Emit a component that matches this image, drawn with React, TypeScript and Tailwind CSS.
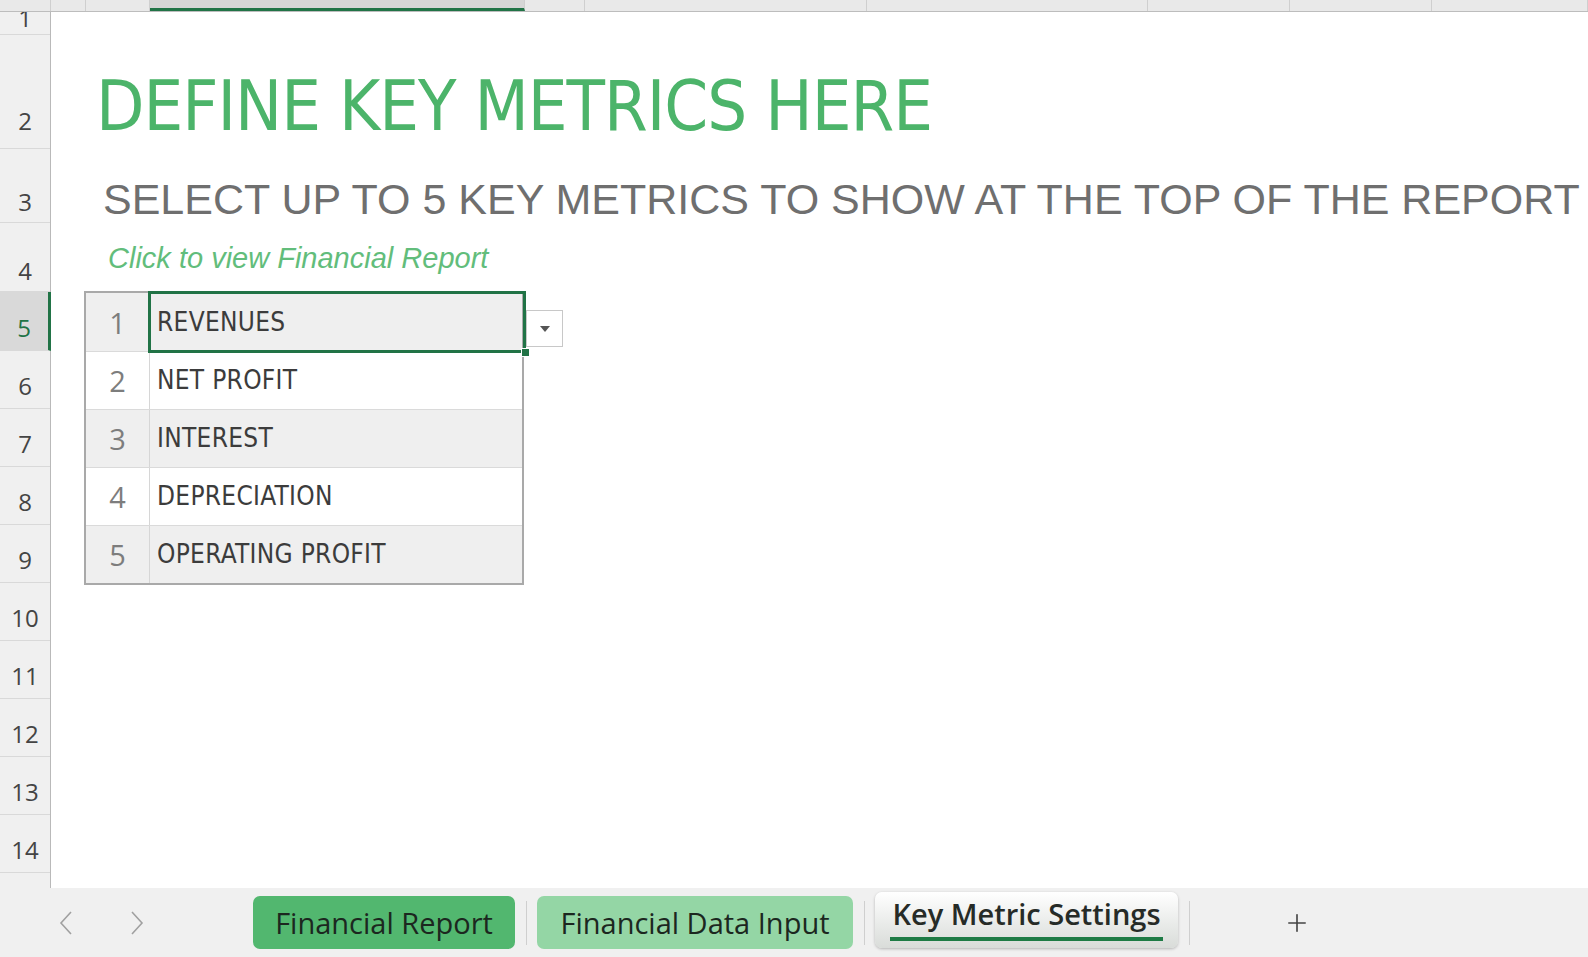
import { Plus } from 'lucide-react'

const colCells = [
  { w: 'w-[51px]', sel: false },
  { w: 'w-[35px]', sel: false },
  { w: 'w-[64px]', sel: false },
  { w: 'w-[375px]', sel: true },
  { w: 'w-[60px]', sel: false },
  { w: 'w-[282px]', sel: false },
  { w: 'w-[281px]', sel: false },
  { w: 'w-[142px]', sel: false },
  { w: 'w-[142px]', sel: false },
  { w: 'w-[156px]', sel: false },
]

// row heights and the bottom gap under each number, as the sheet has them
const rowHeads = [
  { n: 2, h: 'h-[114px]', pb: 'pb-[15px]' },
  { n: 3, h: 'h-[74px]', pb: 'pb-[8px]' },
  { n: 4, h: 'h-[69px]', pb: 'pb-[8px]' },
  { n: 5, h: 'h-[59px]', pb: 'pb-[10px]' },
  { n: 6, h: 'h-[58px]', pb: 'pb-[10px]' },
  { n: 7, h: 'h-[58px]', pb: 'pb-[10px]' },
  { n: 8, h: 'h-[58px]', pb: 'pb-[10px]' },
  { n: 9, h: 'h-[58px]', pb: 'pb-[10px]' },
  { n: 10, h: 'h-[58px]', pb: 'pb-[10px]' },
  { n: 11, h: 'h-[58px]', pb: 'pb-[10px]' },
  { n: 12, h: 'h-[58px]', pb: 'pb-[10px]' },
  { n: 13, h: 'h-[58px]', pb: 'pb-[10px]' },
  { n: 14, h: 'h-[58px]', pb: 'pb-[10px]' },
]

const metrics = ['REVENUES', 'NET PROFIT', 'INTEREST', 'DEPRECIATION', 'OPERATING PROFIT']

function ColumnHeader() {
  return (
    <div className="flex h-[12px] shrink-0 bg-[#e9e9e9] border-b border-[#bdbdbd]">
      {colCells.map((c, i) => (
        <div
          key={i}
          className={`${c.w} shrink-0 border-r border-[#cfcfcf] ${c.sel ? 'bg-[#d6d6d6] border-b-[3px] border-b-[#217346]' : ''}`}
        />
      ))}
      <div className="flex-1" />
    </div>
  )
}

function RowHeaders() {
  return (
    <div className="w-[51px] shrink-0 bg-[#f0f0f0] border-r border-[#b9b9b9] flex flex-col font-['Open_Sans',sans-serif] text-[24px] text-[#444]">
      <div className="h-[23px] shrink-0 overflow-hidden border-b border-[#d9d9d9] flex justify-center">
        <span className="leading-none -mt-[6px]">1</span>
      </div>
      {rowHeads.map(r => (
        <div
          key={r.n}
          className={`${r.h} ${r.pb} shrink-0 border-b border-[#d9d9d9] flex items-end justify-center leading-none ${r.n === 5 ? 'bg-[#d9d9d9] text-[#217346] border-r-[3px] border-r-[#217346] -mr-px' : ''}`}
        >
          {r.n}
        </div>
      ))}
      <div className="flex-1" />
    </div>
  )
}

function MetricTable() {
  return (
    <div className="relative ml-[33px] mt-[18px] w-[440px] border-2 border-[#a9a9a9]">
      {metrics.map((m, i) => {
        const shaded = i % 2 === 0
        return (
          <div
            key={m}
            className={`flex h-[58px] ${i > 0 ? 'border-t border-[#dadada]' : ''} ${shaded ? 'bg-[#efefef]' : 'bg-white'}`}
          >
            <div className="w-[64px] shrink-0 border-r border-[#d6d6d6] flex items-center justify-center font-['Open_Sans',sans-serif] text-[29px] text-[#7d7d7d] leading-none">
              {i + 1}
            </div>
            <div className="relative flex-1 flex items-center pl-[7px] font-['DejaVu_Sans_Condensed',sans-serif] text-[26px] tracking-[0.3px] text-[#3c3c3c]">
              {m}
              {i === 0 && (
                <>
                  <div className="absolute -left-[2px] -top-[2px] -right-[4px] -bottom-[2px] border-[3px] border-[#217346]" />
                  <div className="absolute -right-[8px] -bottom-[6px] w-[9px] h-[9px] bg-[#217346] border border-white" />
                </>
              )}
            </div>
          </div>
        )
      })}
      <div className="absolute left-[440px] top-[17px] w-[37px] h-[37px] bg-white border border-[#c8c8c8] flex items-center justify-center">
        <svg width="12" height="8" viewBox="0 0 12 8">
          <path d="M1 1 L11 1 L6 7 Z" fill="#555" />
        </svg>
      </div>
    </div>
  )
}

function Sheet() {
  return (
    <div className="flex-1 min-w-0 bg-white flex flex-col overflow-hidden">
      <div className="ml-[45px] mt-[59px] font-['DejaVu_Sans_Condensed',sans-serif] text-[70px] tracking-[-1px] leading-none text-[#4cb46a] whitespace-nowrap">
        DEFINE KEY METRICS HERE
      </div>
      <div className="ml-[52px] mt-[37px] font-['Liberation_Sans',Arial,sans-serif] text-[43px] leading-none text-[#6f6f6f] whitespace-nowrap">
        SELECT UP TO 5 KEY METRICS TO SHOW AT THE TOP OF THE REPORT
      </div>
      <div className="ml-[57px] mt-[23px] font-['Liberation_Sans',Arial,sans-serif] italic text-[29px] leading-none text-[#62bd7b] whitespace-nowrap">
        Click to view Financial Report
      </div>
      <MetricTable />
    </div>
  )
}

function Chevron({ dir }: { dir: 'left' | 'right' }) {
  return (
    <svg width="14" height="24" viewBox="0 0 14 24" fill="none" stroke="#a0a0a0" strokeWidth="1.6">
      {dir === 'left' ? <path d="M12 1 L2 12 L12 23" /> : <path d="M2 1 L12 12 L2 23" />}
    </svg>
  )
}

function TabBar() {
  return (
    <div className="h-[69px] shrink-0 bg-[#f0f0f0] flex items-center font-['Open_Sans',sans-serif] text-[#1c271f]">
      <div className="w-[253px] shrink-0 flex items-center pl-[59px] gap-[57px]">
        <Chevron dir="left" />
        <Chevron dir="right" />
      </div>
      <div className="w-[262px] h-[53px] shrink-0 rounded-[7px] bg-[#52b76f] flex items-center justify-center text-[29px]">
        Financial Report
      </div>
      <div className="w-[22px] shrink-0 flex justify-center">
        <div className="w-px h-[44px] bg-[#cfcfcf]" />
      </div>
      <div className="w-[316px] h-[53px] shrink-0 rounded-[7px] bg-[#94d6a5] flex items-center justify-center text-[29px]">
        Financial Data Input
      </div>
      <div className="w-[22px] shrink-0 flex justify-center">
        <div className="w-px h-[44px] bg-[#cfcfcf]" />
      </div>
      <div className="w-[303px] h-[56px] shrink-0 -mt-[6px] rounded-[7px] bg-gradient-to-b from-[#ffffff] to-[#d9dcd9] shadow-[0_1px_3px_rgba(0,0,0,0.25)] flex flex-col items-center justify-center">
        <span className="text-[29px] font-semibold text-[#262b27] leading-none">Key Metric Settings</span>
        <div className="w-[273px] h-[4px] mt-[9px] bg-[#1e7b45]" />
      </div>
      <div className="w-[22px] shrink-0 flex justify-center">
        <div className="w-px h-[44px] bg-[#cfcfcf]" />
      </div>
      <div className="flex-1 flex items-center pl-[83px] text-[#444]">
        <Plus size={28} strokeWidth={1.4} />
      </div>
    </div>
  )
}

export default function App() {
  return (
    <div className="w-[1588px] h-[957px] overflow-hidden bg-white flex flex-col">
      <ColumnHeader />
      <div className="flex flex-1 min-h-0">
        <RowHeaders />
        <Sheet />
      </div>
      <TabBar />
    </div>
  )
}
